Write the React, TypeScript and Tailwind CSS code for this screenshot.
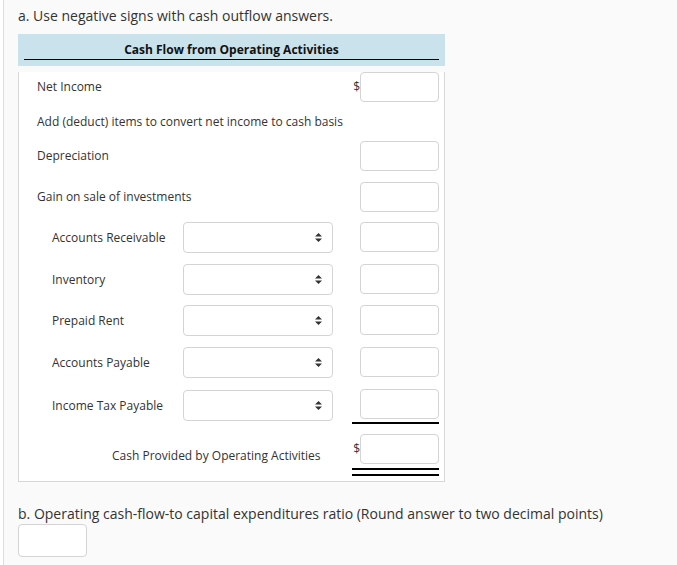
import React from "react";

const Sort = () => (
  <svg width="7" height="9" viewBox="0 0 7 9">
    <path d="M3.5 0 L7 3.5 H0Z M0 5.5 H7 L3.5 9Z" fill="#333" />
  </svg>
);

const Box = ({ h = "h-[30px]" }: { h?: string }) => (
  <div className={`w-[79px] ${h} border border-[#d4d4d4] rounded-[4px] bg-white`} />
);

const Select = () => (
  <div className="w-[150px] h-[31px] border border-[#d4d4d4] rounded-[4px] bg-white flex items-center justify-end pr-[10px]">
    <Sort />
  </div>
);

const Dollar = () => (
  <div className="w-[8px] text-[12px] leading-[16px] text-[#333] flex justify-end">$</div>
);

const SelectRow = ({ label, mt }: { label: string; mt: string }) => (
  <div className={`flex items-center h-[31px] pr-[5px] ${mt}`}>
    <div className="w-[164px] pl-[33px] text-[12px] text-[#333]">{label}</div>
    <Select />
    <div className="flex-1" />
    <div className="w-[87px] flex justify-end self-start">
      <Box />
    </div>
  </div>
);

export default function App() {
  return (
    <div className="min-h-screen bg-white pl-[3px]" style={{ fontFamily: '"Open Sans", sans-serif' }}>
      <div className="min-h-screen bg-[#fafafa] border-l border-[#dedede] pl-[14px] pt-[6px] pb-[8px]">
        <div className="text-[14px] leading-[20px] text-[#333]">a. Use negative signs with cash outflow answers.</div>

        <div className="mt-[8px] w-[427px]">
          <div className="bg-[#c9e2ec] pt-[8px] px-[6px] pb-[6px]">
            <div className="border-b border-black pb-[1px] text-center text-[12px] leading-[16px] font-bold text-[#111]">
              Cash Flow from Operating Activities
            </div>
          </div>
          <div className="bg-white border-l border-r border-b border-[#d8d8d8] pb-[5px]">
            {/* Net Income */}
            <div className="flex items-center h-[30px] pr-[5px] mt-[6px]">
              <div className="flex-1 pl-[18px] text-[12px] text-[#333]">Net Income</div>
              <div className="w-[87px] flex items-center">
                <Dollar />
                <Box />
              </div>
            </div>
            {/* Add (deduct) */}
            <div className="flex items-center h-[20px] mt-[10px] pl-[18px] text-[12px] text-[#333]">
              Add (deduct) items to convert net income to cash basis
            </div>
            {/* Depreciation */}
            <div className="flex items-center h-[30px] pr-[5px] mt-[9px]">
              <div className="flex-1 pl-[18px] text-[12px] text-[#333]">Depreciation</div>
              <div className="w-[87px] flex justify-end">
                <Box />
              </div>
            </div>
            {/* Gain */}
            <div className="flex items-center h-[30px] pr-[5px] mt-[11px]">
              <div className="flex-1 pl-[18px] text-[12px] text-[#333]">Gain on sale of investments</div>
              <div className="w-[87px] flex justify-end">
                <Box />
              </div>
            </div>

            <SelectRow label="Accounts Receivable" mt="mt-[10px]" />
            <SelectRow label="Inventory" mt="mt-[11px]" />
            <SelectRow label="Prepaid Rent" mt="mt-[10px]" />
            <SelectRow label="Accounts Payable" mt="mt-[11px]" />

            {/* Income Tax Payable */}
            <div className="flex items-start pr-[5px] mt-[11px]">
              <div className="flex items-center h-[31px] mt-[1px]">
                <div className="w-[164px] pl-[33px] text-[12px] text-[#333]">Income Tax Payable</div>
                <Select />
              </div>
              <div className="flex-1" />
              <div className="w-[87px] flex justify-end border-b-2 border-black pb-[3px]">
                <Box />
              </div>
            </div>

            {/* Cash Provided */}
            <div className="flex items-start pr-[5px] mt-[10px]">
              <div className="flex-1 pl-[93px] pt-[14px] text-[12px] leading-[16px] text-[#333]">
                Cash Provided by Operating Activities
              </div>
              <div className="w-[87px]">
                <div className="flex items-center">
                  <Dollar />
                  <Box />
                </div>
                <div className="mt-[4px] h-[2px] bg-black" />
                <div className="mt-[4px] h-[2px] bg-black" />
              </div>
            </div>
          </div>
        </div>

        <div className="mt-[22px] text-[14px] leading-[20px] text-[#333]">
          b. Operating cash-flow-to capital expenditures ratio (Round answer to two decimal points)
        </div>
        <div className="mt-[0px] w-[69px] h-[33px] border border-[#d4d4d4] rounded-[4px] bg-white" />
      </div>
    </div>
  );
}
